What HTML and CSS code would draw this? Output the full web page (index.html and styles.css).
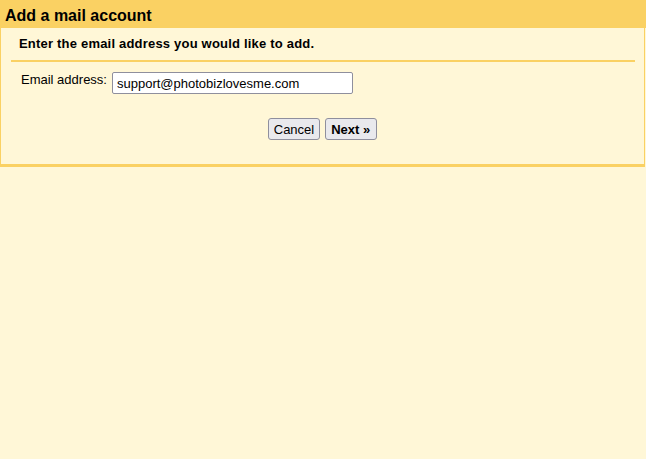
FILE: index.html
```html
<!DOCTYPE html>
<html>
<head>
<meta charset="utf-8">
<title>Add a mail account</title>
<link rel="stylesheet" href="styles.css">
</head>
<body>
<div class="header">Add a mail account</div>
<div class="dialog">
  <div class="intro">Enter the email address you would like to add.</div>
  <div class="separator"></div>
  <div class="field-row">
    <label class="field-label" for="email">Email address:</label>
    <input class="field-input" id="email" type="text" value="support@photobizlovesme.com">
  </div>
  <div class="actions">
    <button class="btn" type="button">Cancel</button>
    <button class="btn btn-primary" type="button">Next &raquo;</button>
  </div>
</div>
</body>
</html>
```

FILE: styles.css
```css
html, body {
  margin: 0;
  padding: 0;
}

body {
  background: #fff7d7;
  font-family: "Liberation Sans", Arial, sans-serif;
  color: #000;
  width: 646px;
  height: 459px;
  overflow: hidden;
}

.header {
  background: #fad163;
  height: 24px;
  line-height: 24px;
  padding: 4px 0 0 5px;
  font-size: 16px;
  font-weight: bold;
}

.dialog {
  box-sizing: border-box;
  width: 645px;
  border-left: 1px solid #fad163;
  border-right: 1px solid #fad163;
  border-bottom: 3px solid #fad163;
  padding: 8px 9px 24px 10px;
}

.intro {
  font-size: 13px;
  font-weight: bold;
  line-height: 16px;
  letter-spacing: 0.2px;
  padding-left: 8px;
}

.separator {
  height: 2px;
  background: #fad163;
  margin-top: 8px;
}

.field-row {
  display: flex;
  align-items: flex-start;
  margin-top: 10px;
  padding-left: 10px;
}

.field-label {
  width: 91px;
  font-size: 13px;
  line-height: 16px;
}

.field-input {
  width: 241px;
  height: 22px;
  box-sizing: border-box;
  border: 1px solid #8f8f9d;
  border-radius: 2px;
  background: #fff;
  padding: 0 0 0 4px;
  margin: 0;
  font-family: "Liberation Sans", Arial, sans-serif;
  font-size: 13px;
  color: #000;
}

.actions {
  display: flex;
  justify-content: center;
  gap: 5px;
  margin-top: 24px;
  padding-right: 1px;
}

.btn {
  height: 22px;
  box-sizing: border-box;
  border: 1px solid #8f8f9d;
  border-radius: 3px;
  background: #e9e9ed;
  padding: 0 4.5px;
  margin: 0;
  font-family: "Liberation Sans", Arial, sans-serif;
  font-size: 13px;
  color: #000;
}

.btn-primary {
  font-weight: bold;
  padding: 0 5.5px;
}
```
